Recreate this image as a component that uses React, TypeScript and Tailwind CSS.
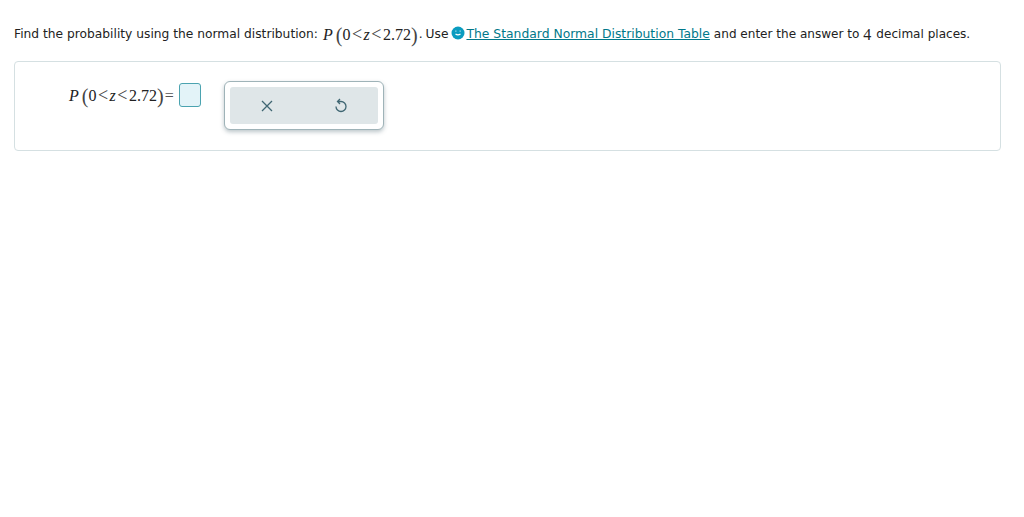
import React from 'react';

const serif = "font-['Liberation_Serif',serif]";

const Formula = () => (
  <span className={`${serif} inline-flex items-center text-[16px] text-[#222]`}>
    <i>P</i>
    <span className="ml-[3px] text-[20px] leading-none font-light text-[#444]">(</span>
    <span>0</span>
    <span className="mx-[1.5px] text-[18px] text-[#444]">&lt;</span>
    <i>z</i>
    <span className="mx-[1.5px] text-[18px] text-[#444]">&lt;</span>
    <span>2.72</span>
    <span className="text-[20px] leading-none font-light text-[#444]">)</span>
  </span>
);

const App = () => {
  return (
    <div className="w-[1024px] h-[517px] bg-white px-[14px] pt-[24px] font-['DejaVu_Sans',sans-serif] text-[12.25px] text-[#222] overflow-hidden">
      <p className="flex items-center h-[19px] pt-[2px] whitespace-nowrap">
        <span>Find the probability using the normal distribution:</span>
        <span className="ml-[5px] flex items-center">
          <Formula />
          <span className="ml-[1px]">.</span>
        </span>
        <span className="ml-[3px]">Use</span>
        <svg className="ml-[3px] mb-[3px]" width="14" height="14" viewBox="0 0 14 14">
          <circle cx="7" cy="7" r="6.5" fill="#0a9cc0" />
          <path d="M4.5 5.2h.8M8.7 5.2h.8M4.5 8q2.5 1.8 5 0" stroke="#fff" strokeWidth="1.2" fill="none" />
        </svg>
        <a href="#" className="ml-[1px] text-[12.35px] text-[#00788a] underline">The Standard Normal Distribution Table</a>
        <span className="ml-[4px] text-[12.05px]">and enter the answer to</span>
        <span className={`${serif} ml-[4px] text-[16px]`}>4</span>
        <span className="ml-[5px] text-[12.05px]">decimal places.</span>
      </p>

      <div className="mt-[18px] w-[987px] h-[90px] border border-[#d5e0e2] rounded-[4px] pl-[54px] pt-[20px] flex items-start">
        <div className="flex items-center h-[27px]">
          <Formula />
          <span className={`${serif} ml-[1px] text-[16px] text-[#555]`}>=</span>
          <div className="ml-[5px] -mt-[1px] w-[22px] h-[24px] border border-[#4ba3b0] rounded-[3px] bg-[#e3f3f8]" />
        </div>
        <div className="ml-[23px] -mt-[1px] w-[160px] h-[49px] p-[5px] bg-white border border-[#9fb3b8] rounded-[6px] shadow-[0_2px_4px_rgba(60,90,100,0.35)]">
          <div className="h-full bg-[#dfe6e8] rounded-[3px] flex items-center">
            <div className="w-1/2 flex justify-center">
              <svg width="14" height="14" viewBox="0 0 14 14" fill="none" stroke="#3f6672" strokeWidth="1.3">
                <path d="M2 2l10 10M12 2L2 12" />
              </svg>
            </div>
            <div className="w-1/2 flex justify-center">
              <svg width="14" height="16" viewBox="0 0 14 16" fill="none" stroke="#3f6672" strokeWidth="1.3">
                <path d="M6 1L3.5 3.5 6 6M3.5 3.5H7a5 5 0 1 1-5 5" />
              </svg>
            </div>
          </div>
        </div>
      </div>
    </div>
  );
};

export default App;
